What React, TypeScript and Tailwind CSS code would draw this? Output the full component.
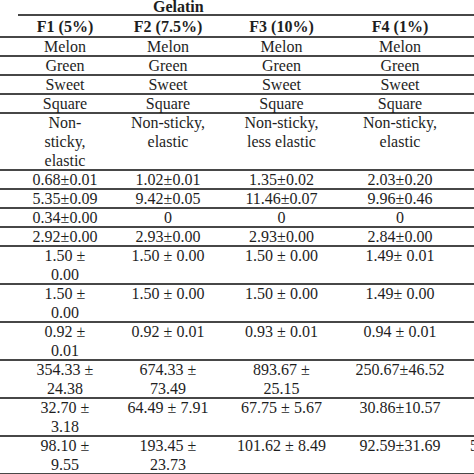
const headers = ["F1 (5%)", "F2 (7.5%)", "F3 (10%)", "F4 (1%)"];

const rows: string[][] = [
  ["Melon", "Melon", "Melon", "Melon"],
  ["Green", "Green", "Green", "Green"],
  ["Sweet", "Sweet", "Sweet", "Sweet"],
  ["Square", "Square", "Square", "Square"],
  ["Non-sticky, elastic", "Non-sticky, elastic", "Non-sticky, less elastic", "Non-sticky, elastic"],
  ["0.68±0.01", "1.02±0.01", "1.35±0.02", "2.03±0.20"],
  ["5.35±0.09", "9.42±0.05", "11.46±0.07", "9.96±0.46"],
  ["0.34±0.00", "0", "0", "0"],
  ["2.92±0.00", "2.93±0.00", "2.93±0.00", "2.84±0.00"],
  ["1.50 ± 0.00", "1.50 ± 0.00", "1.50 ± 0.00", "1.49± 0.01"],
  ["1.50 ± 0.00", "1.50 ± 0.00", "1.50 ± 0.00", "1.49± 0.00"],
  ["0.92 ± 0.01", "0.92 ± 0.01", "0.93 ± 0.01", "0.94 ± 0.01"],
  ["354.33 ± 24.38", "674.33 ± 73.49", "893.67 ± 25.15", "250.67±46.52"],
  ["32.70 ± 3.18", "64.49 ± 7.91", "67.75 ± 5.67", "30.86±10.57"],
  ["98.10 ± 9.55", "193.45 ± 23.73", "101.62 ± 8.49", "92.59±31.69"],
];

const cell = "border-b-2 border-[#474747] px-3 align-top text-center";

export default function App() {
  return (
    <div className="h-[474px] w-[474px] overflow-hidden bg-white text-[16px] text-[#1e1e1e] [font-family:'Liberation_Serif','Times_New_Roman',serif]">
      <table className="-mt-[3px] w-[601px] table-fixed border-separate border-spacing-0">
        <colgroup>
          <col className="w-[18px]" />
          <col className="w-[94px]" />
          <col className="w-[112px]" />
          <col className="w-[115px]" />
          <col className="w-[122px]" />
          <col className="w-[140px]" />
        </colgroup>
        <thead>
          <tr>
            <th className="p-0" />
            <th colSpan={5} className="border-b-2 border-[#474747] p-0 pl-[135px] text-left align-top font-bold">
              <div className="-mb-[2px] leading-[19px]">Gelatin</div>
            </th>
          </tr>
          <tr>
            <th className="border-b-2 border-[#474747] p-0" />
            {headers.map((h) => (
              <th key={h} className={`${cell} font-bold`}>
                <div className="pt-px leading-[19px]">{h}</div>
              </th>
            ))}
            <th className="border-b-2 border-[#474747] p-0" />
          </tr>
        </thead>
        <tbody>
          {rows.map((row, i) => (
            <tr key={i}>
              <td className="border-b-2 border-[#474747] p-0">
                <div className="-my-px leading-[19px]">&nbsp;</div>
              </td>
              {row.map((value, j) => (
                <td key={j} className={cell}>
                  <div className="-my-px leading-[19px]">{value}</div>
                </td>
              ))}
              <td className="border-b-2 border-[#474747] pl-[9px] text-left align-top">
                <div className="-my-px leading-[19px]">{i === rows.length - 1 ? "55.32 ±" : ""}</div>
              </td>
            </tr>
          ))}
        </tbody>
      </table>
    </div>
  );
}
